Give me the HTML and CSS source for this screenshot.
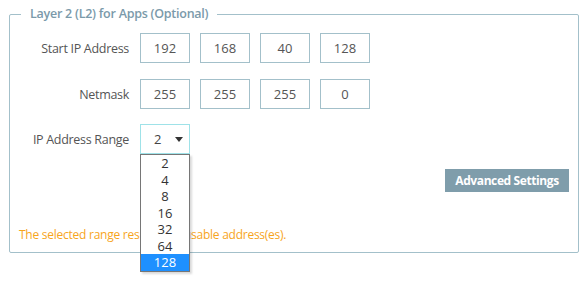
FILE: index.html
```html
<!DOCTYPE html>
<html lang="en">
<head>
<meta charset="utf-8">
<title>Layer 2 (L2) for Apps</title>
<link rel="stylesheet" href="styles.css">
</head>
<body>
<section class="panel">
  <h2 class="panel-title">Layer 2 (L2) for Apps (Optional)</h2>
  <div class="form-grid">
    <label class="field-label">Start IP Address</label>
    <div class="octets">
      <div class="octet">192</div>
      <div class="octet">168</div>
      <div class="octet">40</div>
      <div class="octet">128</div>
    </div>
    <label class="field-label">Netmask</label>
    <div class="octets">
      <div class="octet">255</div>
      <div class="octet">255</div>
      <div class="octet">255</div>
      <div class="octet">0</div>
    </div>
    <label class="field-label">IP Address Range</label>
    <div class="select-wrap">
      <div class="select">
        <span class="select-value">2</span>
        <svg class="caret" width="8" height="5" viewBox="0 0 8 5"><path d="M0 0h8L4 5z" fill="#333"/></svg>
      </div>
      <ul class="dropdown">
        <li>2</li>
        <li>4</li>
        <li>8</li>
        <li>16</li>
        <li>32</li>
        <li>64</li>
        <li class="active">128</li>
      </ul>
    </div>
  </div>
  <div class="actions">
    <button class="btn-advanced" type="button">Advanced Settings</button>
  </div>
  <p class="warning">The selected range results in 0 usable address(es).</p>
</section>
</body>
</html>
```

FILE: styles.css
```css
html, body {
  margin: 0;
  padding: 0;
  background: #ffffff;
}

body {
  min-height: 285px;
  padding-top: 14px;
  box-sizing: border-box;
  font-family: "Open Sans", "Noto Sans", sans-serif;
  color: #555555;
}

.panel {
  box-sizing: border-box;
  width: 570px;
  height: 239px;
  margin: 0 0 0 9px;
  padding: 0 9px;
  border: 1px solid #a3c0ca;
  border-radius: 2px;
}

.panel-title {
  display: block;
  width: fit-content;
  margin: -10px 0 0 2px;
  padding: 0 9px;
  background: #ffffff;
  font-size: 12.5px;
  line-height: 18px;
  font-weight: 600;
  letter-spacing: -0.25px;
  color: #7b9aaa;
}

.form-grid {
  display: grid;
  grid-template-columns: 110px auto;
  column-gap: 11px;
  row-gap: 16px;
  align-items: center;
  margin-top: 10px;
}

.field-label {
  text-align: right;
  font-size: 12.5px;
  letter-spacing: -0.3px;
  color: #555555;
}

.octets {
  display: flex;
  gap: 10px;
}

.octet {
  box-sizing: border-box;
  width: 50px;
  height: 30px;
  border: 1px solid #a3c0ca;
  display: flex;
  align-items: center;
  justify-content: center;
  font-size: 13px;
  color: #555555;
}

.select-wrap {
  position: relative;
  width: 50px;
  margin-top: -1px;
}

.select {
  box-sizing: border-box;
  width: 50px;
  height: 30px;
  border: 1px solid #9fe2e8;
  display: flex;
  align-items: center;
  padding: 0 6px 0 13px;
  justify-content: space-between;
}

.select-value {
  font-size: 13px;
  color: #444444;
}

.caret {
  display: block;
}

.dropdown {
  position: absolute;
  top: 30px;
  left: 0;
  box-sizing: border-box;
  width: 50px;
  margin: 0;
  padding: 0;
  list-style: none;
  background: #ffffff;
  border: 1px solid #767676;
  box-shadow: 2px 2px 2px rgba(0, 0, 0, 0.15);
  z-index: 2;
}

.dropdown li {
  height: 16.5px;
  line-height: 16.5px;
  text-align: center;
  font-size: 13px;
  color: #333333;
}

.dropdown li.active {
  background: #1e90ff;
  color: #ffffff;
}

.actions {
  display: flex;
  justify-content: flex-end;
  margin-top: 15px;
}

.btn-advanced {
  box-sizing: border-box;
  width: 124px;
  height: 23px;
  border: 0;
  border-radius: 0;
  padding: 0;
  background: #7f9dab;
  color: #ffffff;
  font-family: "Open Sans", sans-serif;
  font-weight: 700;
  font-size: 12px;
  letter-spacing: -0.4px;
}

.warning {
  margin: 35px 0 0 0;
  font-size: 12px;
  line-height: 16px;
  letter-spacing: -0.25px;
  color: #f7a51c;
}
```
